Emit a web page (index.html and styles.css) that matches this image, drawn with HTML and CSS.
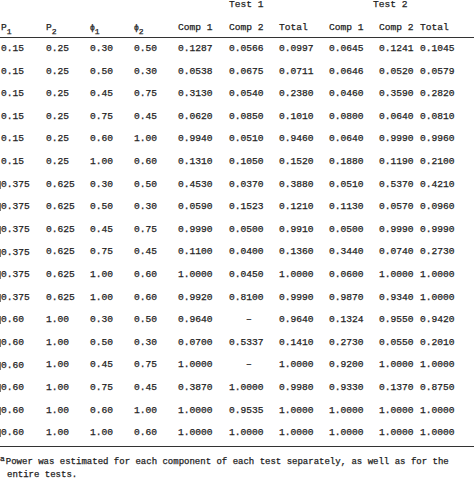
FILE: index.html
```html
<!DOCTYPE html>
<html>
<head>
<meta charset="utf-8">
<link rel="stylesheet" href="styles.css">
</head>
<body>
<div class="page">
  <div class="row head1">
    <span></span><span></span><span></span><span></span><span></span>
    <span class="t1">Test 1</span><span></span>
    <span></span><span class="t2">Test 2</span><span></span>
  </div>
  <div class="row head2">
    <span>P<sub>1</sub></span><span>P<sub>2</sub></span><span><span class="phi">ϕ</span><sub>1</sub></span><span><span class="phi">ϕ</span><sub>2</sub></span>
    <span>Comp 1</span><span>Comp 2</span><span>Total</span>
    <span>Comp 1</span><span>Comp 2</span><span>Total</span>
  </div>
  <div class="rule"></div>
  <div class="body" id="body"></div>
  <div class="rule bottom"></div>
  <div class="note"><sup>a</sup>Power was estimated for each component of each test separately, as well as for the<br><span class="indent">entire tests.</span></div>
</div>
<script src="script.js"></script>
</body>
</html>
```
FILE: script.js
```js
const rows = [
["0.15","0.25","0.30","0.50","0.1287","0.0566","0.0997","0.0645","0.1241","0.1045"],
["0.15","0.25","0.50","0.30","0.0538","0.0675","0.0711","0.0646","0.0520","0.0579"],
["0.15","0.25","0.45","0.75","0.3130","0.0540","0.2380","0.0460","0.3590","0.2820"],
["0.15","0.25","0.75","0.45","0.0620","0.0850","0.1010","0.0800","0.0640","0.0810"],
["0.15","0.25","0.60","1.00","0.9940","0.0510","0.9460","0.0640","0.9990","0.9960"],
["0.15","0.25","1.00","0.60","0.1310","0.1050","0.1520","0.1880","0.1190","0.2100"],
["0.375","0.625","0.30","0.50","0.4530","0.0370","0.3880","0.0510","0.5370","0.4210"],
["0.375","0.625","0.50","0.30","0.0590","0.1523","0.1210","0.1130","0.0570","0.0960"],
["0.375","0.625","0.45","0.75","0.9990","0.0500","0.9910","0.0500","0.9990","0.9990"],
["0.375","0.625","0.75","0.45","0.1100","0.0400","0.1360","0.3440","0.0740","0.2730"],
["0.375","0.625","1.00","0.60","1.0000","0.0450","1.0000","0.0600","1.0000","1.0000"],
["0.375","0.625","1.00","0.60","0.9920","0.8100","0.9990","0.9870","0.9340","1.0000"],
["0.60","1.00","0.30","0.50","0.9640","\u2013","0.9640","0.1324","0.9550","0.9420"],
["0.60","1.00","0.50","0.30","0.0700","0.5337","0.1410","0.2730","0.0550","0.2010"],
["0.60","1.00","0.45","0.75","1.0000","\u2013","1.0000","0.9200","1.0000","1.0000"],
["0.60","1.00","0.75","0.45","0.3870","1.0000","0.9980","0.9330","0.1370","0.8750"],
["0.60","1.00","0.60","1.00","1.0000","0.9535","1.0000","1.0000","1.0000","1.0000"],
["0.60","1.00","1.00","0.60","1.0000","1.0000","1.0000","1.0000","1.0000","1.0000"]
];
const body = document.getElementById("body");
rows.forEach((r, i) => {
  const div = document.createElement("div");
  div.className = "row data";
  r.forEach((v, j) => {
    const s = document.createElement("span");
    if (j === 0 && i >= 6) s.className = "cut";
    if (v === "\u2013") s.className = "dash";
    s.textContent = v;
    div.appendChild(s);
  });
  body.appendChild(div);
});
```
FILE: styles.css
```css
html, body {
  margin: 0;
  padding: 0;
  background: #fff;
}
.page {
  width: 474px;
  padding-left: 1px;
  color: #1e1e1e;
  font-family: "Liberation Mono", "DejaVu Sans Mono", monospace;
  font-size: 9.6px;
  -webkit-text-stroke: 0.25px #1e1e1e;
}
.row {
  display: grid;
  grid-template-columns: 45px 44px 44px 44px 51px 50px 50px 50px 41px 54px;
  white-space: nowrap;
}
.head1 {
  height: 10px;
  line-height: 10px;
}
.t2 {
  margin-left: -6px;
}
.head2 {
  padding-top: 11px;
  height: 16px;
  line-height: 14px;
}
.phi {
  font-family: "DejaVu Sans Mono", monospace;
  font-size: 8px;
}
sub {
  font-size: 8px;
  vertical-align: -4px;
  line-height: 0;
}
.rule {
  height: 1px;
  background: #333;
  margin-left: -1px;
  width: 474px;
}
.data {
  height: 22.6px;
  line-height: 22.6px;
}
.cut {
  border-left: 1px solid #777;
  margin-left: -1px;
  line-height: 8px;
  height: 8px;
  align-self: center;
}
.dash {
  padding-left: 17px;
}
.bottom {
  margin-top: 1px;
}
.note {
  font-size: 9px;
  line-height: 13px;
  margin-top: 9px;
  margin-left: -1px;
}
.note sup {
  font-size: 8px;
  vertical-align: 3px;
  line-height: 0;
  margin-right: 1px;
}
.indent {
  padding-left: 7px;
}
```
